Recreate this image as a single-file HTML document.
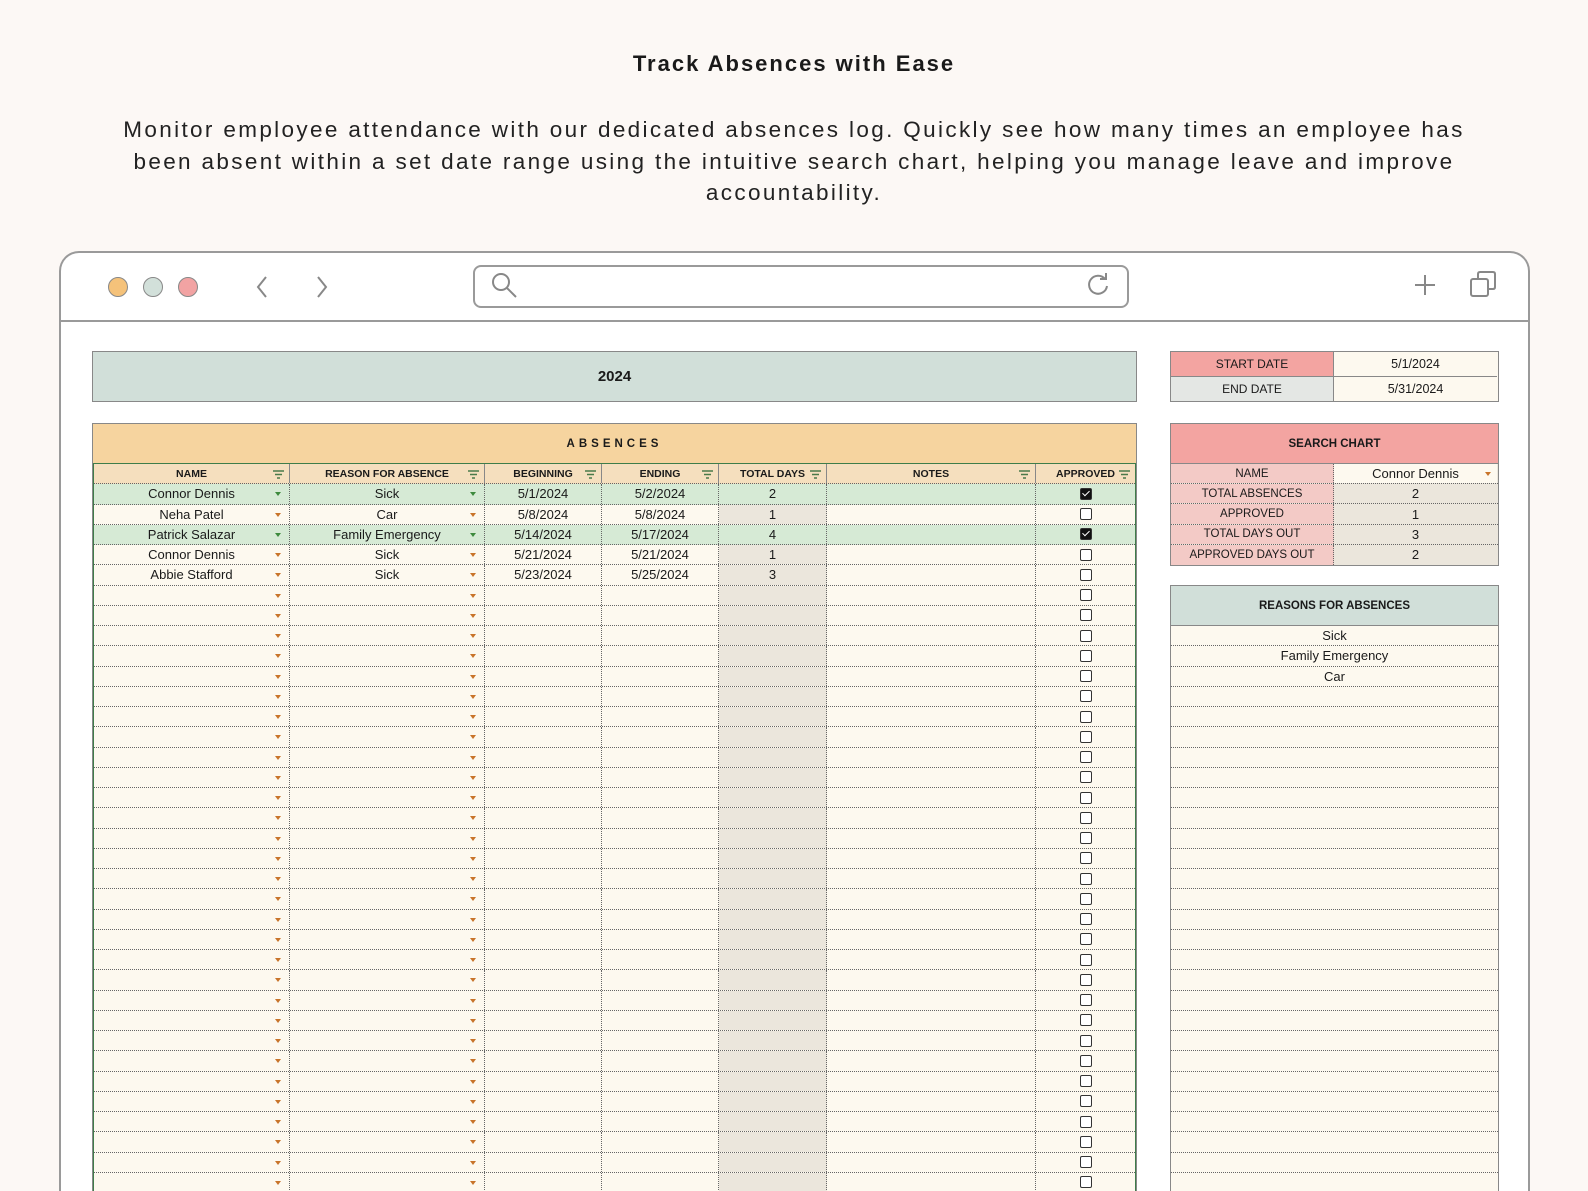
<!DOCTYPE html>
<html><head><meta charset="utf-8">
<style>
*{margin:0;padding:0;box-sizing:border-box}
html{width:1588px;height:1191px;overflow:hidden}
body{width:1588px;height:1191px;overflow:hidden;background:#fcf8f5;font-family:"Liberation Sans",sans-serif;color:#1a1a1a;position:relative}
.title{position:absolute;top:51px;left:0;width:1588px;text-align:center;font-size:22px;font-weight:bold;letter-spacing:2px}
.para{position:absolute;top:114px;left:0;width:1588px;text-align:center;font-size:22.5px;letter-spacing:2.35px;line-height:31.5px;white-space:nowrap;color:#222}
.frame{position:absolute;left:59px;top:251px;width:1471px;height:940px;border:2px solid #9a9a9a;border-bottom:none;border-radius:20px 20px 0 0;background:#fff}
.tb{position:absolute;left:0;top:0;right:0;height:69px;border-bottom:2px solid #9a9a9a}
.dot{position:absolute;top:24px;width:20px;height:20px;border-radius:50%;border:1.5px solid #888}
.abs{position:absolute}
.cell{position:absolute;display:flex;align-items:center;justify-content:center;font-size:13px}
.row{position:absolute;left:0;height:20.25px;width:100%;border-bottom:1px dotted #666}
.c{position:absolute;top:0;height:100%;border-right:1px dotted #666;display:flex;align-items:center;justify-content:center;font-size:13px}
.ar{position:absolute;right:8px;top:8px;width:0;height:0;border-left:3.5px solid transparent;border-right:3.5px solid transparent;border-top:4px solid #c8742a}
.g .ar{border-top-color:#3d8a3d}
.cb{width:12px;height:12px;border:1.5px solid #333;border-radius:2px;background:#fff}
.cb.on{background:#111;position:relative}
.cb.on:after{content:"";position:absolute;left:3px;top:0px;width:3px;height:6px;border:solid #fff;border-width:0 1.5px 1.5px 0;transform:rotate(45deg)}
.hd{position:absolute;top:0;height:100%;border-right:1px solid #888;display:flex;align-items:center;justify-content:center;font-size:10.5px;font-weight:bold}
.fl{position:absolute;right:5px;top:6px}
</style></head><body>
<div class="title">Track Absences with Ease</div>
<div class="para">Monitor employee attendance with our dedicated absences log. Quickly see how many times an employee has<br>been absent within a set date range using the intuitive search chart, helping you manage leave and improve<br>accountability.</div>

<div class="frame">
 <div class="tb">
  <div class="dot" style="left:47px;background:#f5c27a"></div>
  <div class="dot" style="left:82px;background:#d2e0da"></div>
  <div class="dot" style="left:117px;background:#f2a3a3"></div>
  <svg class="abs" style="left:194px;top:22px" width="14" height="24"><path d="M11 2 L3 12 L11 22" stroke="#888" stroke-width="2" fill="none"/></svg>
  <svg class="abs" style="left:254px;top:22px" width="14" height="24"><path d="M3 2 L11 12 L3 22" stroke="#888" stroke-width="2" fill="none"/></svg>
  <div class="abs" style="left:412px;top:12px;width:656px;height:43px;border:2px solid #9a9a9a;border-radius:8px"></div>
  <svg class="abs" style="left:429px;top:18px" width="30" height="30"><circle cx="11" cy="11" r="8" stroke="#888" stroke-width="2" fill="none"/><path d="M17 17 L26 26" stroke="#888" stroke-width="2"/></svg>
  <svg class="abs" style="left:1024px;top:18px" width="28" height="28"><path d="M20 8 A9 9 0 1 0 22 15" stroke="#888" stroke-width="2" fill="none"/><path d="M15 8 H21 V2" stroke="#888" stroke-width="2" fill="none"/></svg>
  <svg class="abs" style="left:1352px;top:20px" width="24" height="24"><path d="M12 2 V22 M2 12 H22" stroke="#888" stroke-width="2"/></svg>
  <svg class="abs" style="left:1408px;top:17px" width="30" height="30"><rect x="2" y="9" width="17" height="17" rx="2" stroke="#888" stroke-width="2" fill="#fff"/><path d="M9 9 V4 Q9 2 11 2 H24 Q26 2 26 4 V17 Q26 19 24 19 H19" stroke="#888" stroke-width="2" fill="none"/></svg>
 </div>
</div>

<div class="cell" style="left:92px;top:351px;width:1045px;height:51px;background:#d1dfd9;border:1.5px solid #888;font-weight:bold;font-size:15px">2024</div>
<div class="abs" style="left:1170px;top:351px;width:329px;height:51px;border:1.5px solid #888;background:#fdf9ef">
 <div class="cell" style="left:0;top:0;width:163px;height:25px;background:#f3a4a1;border-right:1px solid #888;border-bottom:1px solid #888;font-size:12px">START DATE</div>
 <div class="cell" style="left:0;top:25px;width:163px;height:24px;background:#e4e7e4;border-right:1px solid #888;font-size:12px">END DATE</div>
 <div class="cell" style="left:163px;top:0;width:163px;height:25px;border-bottom:1px solid #888;font-size:12.5px">5/1/2024</div>
 <div class="cell" style="left:163px;top:25px;width:163px;height:24px;font-size:12.5px">5/31/2024</div>
</div>

<div class="abs" style="left:92px;top:423px;width:1045px;height:768px;background:#fdf9ef;border:1.5px solid #888;border-bottom:none;overflow:hidden">
 <div class="cell" style="left:0;top:0;width:100%;height:40px;background:#f6d49f;font-weight:bold;font-size:11.5px;letter-spacing:4px;border-bottom:1.5px solid #3e7d4a">ABSENCES</div>
 <div id="tbl" class="abs" style="left:0;top:40px;width:100%;height:730px;border-left:1.5px solid #3e7d4a;border-right:1.5px solid #3e7d4a;overflow:hidden"></div>
</div>

<div class="abs" style="left:1170px;top:423px;width:329px;height:143px;border:1.5px solid #888;background:#ebe6dc">
 <div class="cell" style="left:0;top:0;width:100%;height:40px;background:#f3a4a1;border-bottom:1.5px solid #888;font-weight:bold;font-size:11.5px">SEARCH CHART</div>
 <div id="sc"></div>
</div>

<div class="abs" style="left:1170px;top:585px;width:329px;height:606px;border:1.5px solid #888;border-bottom:none;background:#fdf9ef;overflow:hidden">
 <div class="cell" style="left:0;top:0;width:100%;height:40px;background:#d1dfd9;border-bottom:1.5px solid #888;font-weight:bold;font-size:11.5px">REASONS FOR ABSENCES</div>
 <div id="rs" class="abs" style="left:0;top:40px;width:100%;height:566px;overflow:hidden"></div>
</div>

<script>
var W=[196,195,117,117,108,209,100],X=[0];for(var i=0;i<W.length;i++)X.push(X[i]+W[i]);
var filt='<svg class="fl" width="11" height="9"><path d="M0 1H11M2 4.5H9M4 8H7" stroke="#4a7a4a" stroke-width="1.4"/></svg>';
var H=['NAME','REASON FOR ABSENCE','BEGINNING','ENDING','TOTAL DAYS','NOTES','APPROVED'];
var h='<div class="row" style="top:0;background:#f5dfbe;border-bottom:1px dotted #666">';
for(i=0;i<7;i++)h+='<div class="hd" style="left:'+X[i]+'px;width:'+W[i]+'px">'+H[i]+filt+'</div>';
h+='</div>';
var D=[['Connor Dennis','Sick','5/1/2024','5/2/2024','2',1],['Neha Patel','Car','5/8/2024','5/8/2024','1',0],['Patrick Salazar','Family Emergency','5/14/2024','5/17/2024','4',1],['Connor Dennis','Sick','5/21/2024','5/21/2024','1',0],['Abbie Stafford','Sick','5/23/2024','5/25/2024','3',0]];
for(var r=0;r<36;r++){var d=D[r]||['','','','','',0];var g=d[5]==1;
 h+='<div class="row'+(g?' g':'')+'" style="top:'+(20.25*(r+1))+'px;background:'+(g?'#d6ead5':'#fdf9ef')+'">';
 for(i=0;i<7;i++){var bg=(i==4&&!g)?'background:#ebe6dc;':'';var t='';
  if(i<5)t=d[i];if(i<2)t+='<span class="ar"></span>';if(i==6)t='<span class="cb'+(g?' on':'')+'"></span>';
  h+='<div class="c" style="left:'+X[i]+'px;width:'+W[i]+'px;'+bg+(i==6?'border-right:none;':'')+'">'+t+'</div>';}
 h+='</div>';}
document.getElementById('tbl').innerHTML=h;
var S=[['NAME','Connor Dennis'],['TOTAL ABSENCES','2'],['APPROVED','1'],['TOTAL DAYS OUT','3'],['APPROVED DAYS OUT','2']];
h='';for(r=0;r<5;r++){h+='<div class="row" style="top:'+(40+20.2*r)+'px;'+(r==4?'border-bottom:none':'')+'"><div class="c" style="left:0;width:163px;background:#f3cac6;font-size:11.5px">'+S[r][0]+'</div><div class="c" style="left:163px;width:163px;border-right:none;'+(r==0?'background:#fdf9ef;':'')+'">'+S[r][1]+(r==0?'<span class="ar" style="right:6px"></span>':'')+'</div></div>';}
document.getElementById('sc').innerHTML=h;
var R=['Sick','Family Emergency','Car'];h='';
for(r=0;r<30;r++)h+='<div class="row" style="top:'+(20.25*r)+'px"><div class="c" style="left:0;width:100%;border-right:none">'+(R[r]||'')+'</div></div>';
document.getElementById('rs').innerHTML=h;
</script>
</body></html>
